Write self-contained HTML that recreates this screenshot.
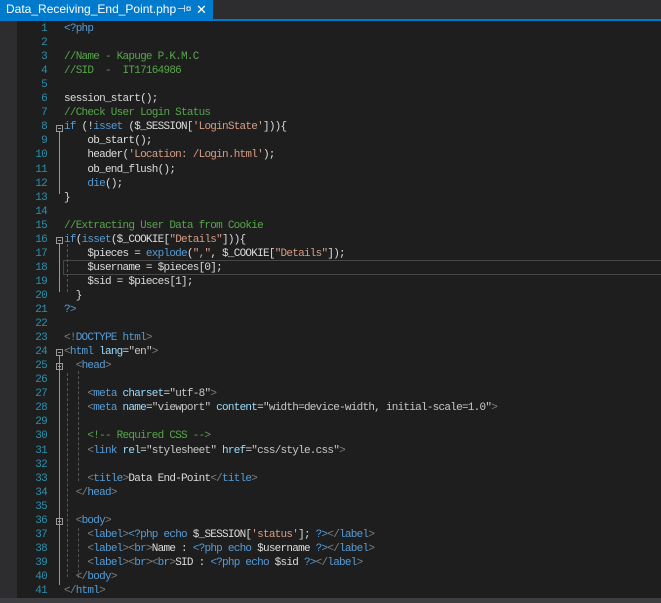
<!DOCTYPE html>
<html><head><style>
body{margin:0;width:661px;height:603px;background:#1e1e1e;overflow:hidden;position:relative;font-family:"Liberation Mono",monospace;}
#tabbar{position:absolute;left:0;top:0;width:661px;height:19px;background:#2d2d30;}
#tab{position:absolute;left:0;top:0;width:213px;height:19px;background:#007acc;color:#fff;font:12px "Liberation Sans",sans-serif;line-height:19px;padding-left:6px;box-sizing:border-box;}
#tab .p{position:absolute;left:177px;top:0;font-size:10px}
#tab .x{position:absolute;left:196px;top:0;font-size:13px}
#line{position:absolute;left:0;top:19px;width:661px;height:2px;background:#007acc}
#strip{position:absolute;left:0;top:21px;width:17px;height:582px;background:#2d2d30}
#bottom{position:absolute;left:0;top:598px;width:661px;height:5px;background:#3e3e42}
#hl{position:absolute;left:63px;top:260px;width:600px;height:13px;border:1px solid #464646}
.ln{position:absolute;left:17px;width:30px;text-align:right;color:#2b91af;font-size:11px;letter-spacing:-0.75px}
.c{position:absolute;left:64px;white-space:pre;color:#dcdcdc;font-size:11px;letter-spacing:-0.75px}
.cm{color:#57a64a}.k{color:#569cd6}.s{color:#d69d85}.g{color:#808080}.a{color:#9cdcfe}.v{color:#c8c8c8}
.fold{position:absolute;left:56px;width:7px;height:7px;border:1px solid #999;box-sizing:border-box}
.fold:after{content:"";position:absolute;left:1px;top:2px;width:3px;height:1px;background:#999}
.vl{position:absolute;width:1px;background:#999}
.dl{position:absolute;width:0;border-left:1px dashed #555}
</style></head><body>
<div id="tabbar"></div>
<div id="tab">Data_Receiving_End_Point.php<span class="p">⊣¤</span><span class="x">✕</span></div>
<div id="line"></div>
<div id="strip"></div>
<div id="hl"></div>
<div id="bottom"></div>

<div class="fold" style="top:125px"></div><div class="vl" style="left:59px;top:132px;height:62px"></div>
<div class="fold" style="top:237px"></div><div class="vl" style="left:59px;top:244px;height:48px"></div>
<div class="fold" style="top:349px"></div><div class="vl" style="left:59px;top:356px;height:229px"></div>
<div class="fold" style="top:363px"></div>
<div class="fold" style="top:518px"></div>
<div class="dl" style="left:67px;top:244px;height:48px"></div>
<div class="dl" style="left:67px;top:373px;height:204px"></div>
<div class="dl" style="left:78px;top:371px;height:110px"></div>
<div class="dl" style="left:78px;top:528px;height:50px"></div>

<div id="code"></div>
<script>
var L=[
'<span class="k">&lt;?php</span>','',
'<span class="cm">//Name - Kapuge P.K.M.C</span>',
'<span class="cm">//SID  -  IT17164986</span>','',
'session_start();',
'<span class="cm">//Check User Login Status</span>',
'<span class="k">if</span> (!<span class="k">isset</span> ($_SESSION[<span class="s">\'LoginState\'</span>])){',
'    ob_start();',
'    header(<span class="s">\'Location: /Login.html\'</span>);',
'    ob_end_flush();',
'    <span class="k">die</span>();',
'}','',
'<span class="cm">//Extracting User Data from Cookie</span>',
'<span class="k">if</span>(<span class="k">isset</span>($_COOKIE[<span class="s">"Details"</span>])){',
'    $pieces = <span class="k">explode</span>(<span class="s">","</span>, $_COOKIE[<span class="s">"Details"</span>]);',
'    $username = $pieces[0];',
'    $sid = $pieces[1];',
'  }',
'<span class="k">?&gt;</span>','',
'<span class="g">&lt;!</span><span class="k">DOCTYPE html</span><span class="g">&gt;</span>',
'<span class="g">&lt;</span><span class="k">html</span> <span class="a">lang</span>=<span class="v">"en"</span><span class="g">&gt;</span>',
'  <span class="g">&lt;</span><span class="k">head</span><span class="g">&gt;</span>','',
'    <span class="g">&lt;</span><span class="k">meta</span> <span class="a">charset</span>=<span class="v">"utf-8"</span><span class="g">&gt;</span>',
'    <span class="g">&lt;</span><span class="k">meta</span> <span class="a">name</span>=<span class="v">"viewport"</span> <span class="a">content</span>=<span class="v">"width=device-width, initial-scale=1.0"</span><span class="g">&gt;</span>','',
'    <span class="cm">&lt;!-- Required CSS --&gt;</span>',
'    <span class="g">&lt;</span><span class="k">link</span> <span class="a">rel</span>=<span class="v">"stylesheet"</span> <span class="a">href</span>=<span class="v">"css/style.css"</span><span class="g">&gt;</span>','',
'    <span class="g">&lt;</span><span class="k">title</span><span class="g">&gt;</span>Data End-Point<span class="g">&lt;/</span><span class="k">title</span><span class="g">&gt;</span>',
'  <span class="g">&lt;/</span><span class="k">head</span><span class="g">&gt;</span>','',
'  <span class="g">&lt;</span><span class="k">body</span><span class="g">&gt;</span>',
'    <span class="g">&lt;</span><span class="k">label</span><span class="g">&gt;</span><span class="k">&lt;?php echo</span> $_SESSION[<span class="s">\'status\'</span>]; <span class="k">?&gt;</span><span class="g">&lt;/</span><span class="k">label</span><span class="g">&gt;</span>',
'    <span class="g">&lt;</span><span class="k">label</span><span class="g">&gt;&lt;</span><span class="k">br</span><span class="g">&gt;</span>Name : <span class="k">&lt;?php echo</span> $username <span class="k">?&gt;</span><span class="g">&lt;/</span><span class="k">label</span><span class="g">&gt;</span>',
'    <span class="g">&lt;</span><span class="k">label</span><span class="g">&gt;&lt;</span><span class="k">br</span><span class="g">&gt;&lt;</span><span class="k">br</span><span class="g">&gt;</span>SID : <span class="k">&lt;?php echo</span> $sid <span class="k">?&gt;</span><span class="g">&lt;/</span><span class="k">label</span><span class="g">&gt;</span>',
'  <span class="g">&lt;/</span><span class="k">body</span><span class="g">&gt;</span>',
'<span class="g">&lt;/</span><span class="k">html</span><span class="g">&gt;</span>'
];
var h='';
for(var i=0;i<L.length;i++){var t=(23+i*14.05).toFixed(2);
h+='<div class="ln" style="top:'+t+'px">'+(i+1)+'</div><div class="c" style="top:'+t+'px">'+L[i]+'</div>';}
document.getElementById('code').innerHTML=h;
</script>
</body></html>
